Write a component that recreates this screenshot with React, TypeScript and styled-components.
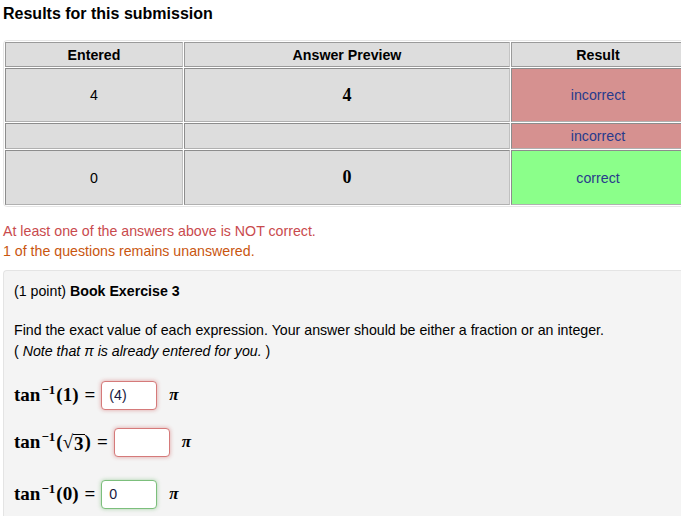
import React from "react";
import styled, { createGlobalStyle } from "styled-components";

const GlobalStyle = createGlobalStyle`
  * {
    box-sizing: border-box;
  }
  html,
  body {
    margin: 0;
    padding: 0;
    overflow: hidden;
    background: #fff;
    font-family: "Liberation Sans", Arial, sans-serif;
    font-size: 14.2px;
    color: #000;
  }
`;

const Page = styled.div`
  width: 690px;
  padding: 0 0 0 3px;
`;

const Title = styled.h2`
  font-size: 16px;
  font-weight: 700;
  margin: 0;
  padding: 5px 0 0 0;
  line-height: 18px;
`;

const Frame = styled.div`
  margin-top: 17px;
  width: 684px;
  border: 1px solid #e6e6e6;
  border-radius: 4px;
`;

const Table = styled.table`
  border-collapse: separate;
  border-spacing: 1px;
  width: 100%;
  table-layout: fixed;
`;

const Th = styled.th<{ $w?: number }>`
  width: ${p => (p.$w ? `${p.$w}px` : "auto")};
  height: 25px;
  background: #dddddd;
  border: 1px solid #9a9a9a;
  border-right-color: #c4c4c4;
  font-size: 14.2px;
  font-weight: 700;
  text-align: center;
  padding: 0;
`;

type Status = "none" | "incorrect" | "correct";

const Td = styled.td<{ $h: number; $status?: Status; $math?: boolean }>`
  height: ${p => p.$h}px;
  background: ${p =>
    p.$status === "incorrect"
      ? "#d69190"
      : p.$status === "correct"
      ? "#8bff8a"
      : "#dddddd"};
  border: 1px solid #8c8c8c;
  border-right-color: #c0c0c0;
  border-bottom-color: #b0b0b0;
  text-align: center;
  padding: 0;
  color: ${p => (p.$status && p.$status !== "none" ? "#283b8c" : "#000")};
  font-family: ${p =>
    p.$math ? `"Liberation Serif", "Times New Roman", serif` : "inherit"};
  font-size: ${p => (p.$math ? "18px" : "14.2px")};
  font-weight: ${p => (p.$math ? 700 : 400)};
`;

const Messages = styled.div`
  margin-top: 14px;
  line-height: 20px;
`;

const Msg = styled.div<{ $tone: "red" | "orange" }>`
  color: ${p => (p.$tone === "red" ? "#c94a4d" : "#c9560f")};
`;

const Problem = styled.div`
  margin-top: 9px;
  width: 700px;
  background: #f4f4f4;
  border: 1px solid #e4e4e4;
  border-right: none;
  border-radius: 4px 0 0 0;
  padding: 10px;
`;

const PointLine = styled.div`
  line-height: 20px;
  strong {
    font-weight: 700;
  }
`;

const Statement = styled.div`
  margin-top: 19px;
  line-height: 21px;
  em {
    font-style: italic;
  }
`;

const MathRow = styled.div<{ $gap: number }>`
  display: flex;
  align-items: center;
  height: 30px;
  margin-top: ${p => p.$gap}px;
`;

const MathText = styled.span`
  display: inline-flex;
  align-items: baseline;
  font-family: "Liberation Serif", "Times New Roman", serif;
  font-size: 19px;
  font-weight: 700;
  white-space: nowrap;
`;

const Sup = styled.span`
  font-size: 13px;
  position: relative;
  top: -7px;
  margin: 0 1px 0 1px;
`;

const Eq = styled.span`
  margin-left: 6px;
`;

const Radical = styled.span`
  display: inline-flex;
  align-items: flex-end;
  span {
    border-top: 1.5px solid #000;
    padding: 0 1px;
    line-height: 18px;
  }
`;

const AnswerBox = styled.div<{ $state: "bad" | "good" }>`
  width: 56px;
  height: 29px;
  margin-left: 6px;
  background: #fff;
  border: 1px solid ${p => (p.$state === "bad" ? "#d57a7a" : "#7cbf7c")};
  border-radius: 4px;
  box-shadow: 0 0 4px
    ${p => (p.$state === "bad" ? "rgba(200,60,60,0.45)" : "rgba(60,160,60,0.4)")};
  font-size: 14.2px;
  line-height: 27px;
  padding-left: 7px;
  color: #1a1a40;
`;

const Pi = styled.span`
  font-family: "Liberation Serif", "Times New Roman", serif;
  font-style: italic;
  font-weight: 700;
  font-size: 17px;
  margin-left: 12px;
`;

const rows: { entered: string; preview: string; result: string; status: Status; h: number }[] = [
  { entered: "4", preview: "4", result: "incorrect", status: "incorrect", h: 54 },
  { entered: "", preview: "", result: "incorrect", status: "incorrect", h: 26 },
  { entered: "0", preview: "0", result: "correct", status: "correct", h: 55 },
];

function App() {
  return (
    <>
      <GlobalStyle />
      <Page>
        <Title>Results for this submission</Title>
        <Frame>
          <Table>
            <thead>
              <tr>
                <Th $w={178}>Entered</Th>
                <Th $w={326}>Answer Preview</Th>
                <Th>Result</Th>
              </tr>
            </thead>
            <tbody>
              {rows.map((r, i) => (
                <tr key={i}>
                  <Td $h={r.h}>{r.entered}</Td>
                  <Td $h={r.h} $math>
                    {r.preview}
                  </Td>
                  <Td $h={r.h} $status={r.status}>
                    {r.result}
                  </Td>
                </tr>
              ))}
            </tbody>
          </Table>
        </Frame>
        <Messages>
          <Msg $tone="red">At least one of the answers above is NOT correct.</Msg>
          <Msg $tone="orange">1 of the questions remains unanswered.</Msg>
        </Messages>
        <Problem>
          <PointLine>
            (1 point) <strong>Book Exercise 3</strong>
          </PointLine>
          <Statement>
            Find the exact value of each expression. Your answer should be either a
            fraction or an integer.
            <br />( <em>Note that π is already entered for you.</em> )
          </Statement>
          <MathRow $gap={18}>
            <MathText>
              tan<Sup>−1</Sup>(1)<Eq>=</Eq>
            </MathText>
            <AnswerBox $state="bad">(4)</AnswerBox>
            <Pi>π</Pi>
          </MathRow>
          <MathRow $gap={17}>
            <MathText>
              tan<Sup>−1</Sup>(
              <Radical>
                √<span>3</span>
              </Radical>
              )<Eq>=</Eq>
            </MathText>
            <AnswerBox $state="bad"></AnswerBox>
            <Pi>π</Pi>
          </MathRow>
          <MathRow $gap={22}>
            <MathText>
              tan<Sup>−1</Sup>(0)<Eq>=</Eq>
            </MathText>
            <AnswerBox $state="good">0</AnswerBox>
            <Pi>π</Pi>
          </MathRow>
        </Problem>
      </Page>
    </>
  );
}

export default App;
